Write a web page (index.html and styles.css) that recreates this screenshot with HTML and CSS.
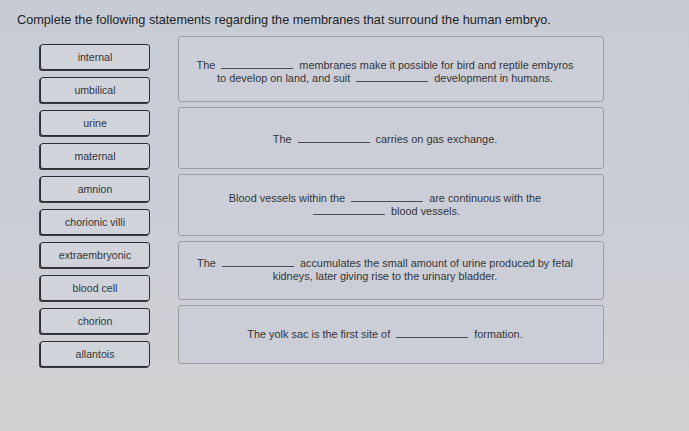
FILE: index.html
```html
<!DOCTYPE html>
<html>
<head>
<meta charset="utf-8">
<link rel="stylesheet" href="styles.css">
</head>
<body>
<h1 class="title">Complete the following statements regarding the membranes that surround the human embryo.</h1>
<div class="main">
  <div class="bank">
    <div class="chip">internal</div>
    <div class="chip">umbilical</div>
    <div class="chip">urine</div>
    <div class="chip">maternal</div>
    <div class="chip">amnion</div>
    <div class="chip">chorionic villi</div>
    <div class="chip">extraembryonic</div>
    <div class="chip">blood cell</div>
    <div class="chip">chorion</div>
    <div class="chip">allantois</div>
  </div>
  <div class="targets">
    <div class="box box1"><p>The <span class="blank"></span> membranes make it possible for bird and reptile embyros<br>to develop on land, and suit <span class="blank"></span> development in humans.</p></div>
    <div class="box box2"><p>The <span class="blank"></span> carries on gas exchange.</p></div>
    <div class="box box3"><p>Blood vessels within the <span class="blank"></span> are continuous with the<br><span class="blank"></span> blood vessels.</p></div>
    <div class="box box4"><p>The <span class="blank"></span> accumulates the small amount of urine produced by fetal<br>kidneys, later giving rise to the urinary bladder.</p></div>
    <div class="box box5"><p>The yolk sac is the first site of <span class="blank"></span> formation.</p></div>
  </div>
</div>
</body>
</html>
```
FILE: styles.css
```css
html, body {
  margin: 0;
  padding: 0;
}
body {
  width: 689px;
  height: 431px;
  overflow: hidden;
  background: linear-gradient(180deg, #c7cbd4 0%, #cacdd5 50%, #d0d1d2 100%);
  font-family: "Liberation Sans", Arial, sans-serif;
  color: #2e3034;
}
.title {
  margin: 0;
  padding: 13px 0 0 17px;
  font-family: "Liberation Sans", Arial, sans-serif;
  font-size: 12.7px;
  font-weight: normal;
  color: #1d1f24;
  line-height: 15px;
}
.main {
  display: flex;
  align-items: flex-start;
  gap: 28px;
  padding-top: 8px;
}
.bank {
  display: flex;
  flex-direction: column;
  gap: 7px;
  padding-left: 40px;
  padding-top: 8px;
}
.chip {
  width: 110px;
  height: 26px;
  box-sizing: border-box;
  border: 1.5px solid #2c2d31;
  border-radius: 3px;
  background: #d0d3da;
  box-shadow: -1px 1px 0 #3a3b3f;
  font-size: 10.6px;
  line-height: 24px;
  text-align: center;
  color: #34363b;
}
.targets {
  display: flex;
  flex-direction: column;
  gap: 5px;
}
.box {
  width: 426px;
  height: 62px;
  box-sizing: border-box;
  border: 1px solid #9a9da5;
  border-radius: 3px;
  background: #cbced6;
  display: flex;
  align-items: center;
  justify-content: center;
  padding: 0 16px 0 4px;
}
.box1 { height: 66px; }
.box4, .box5 { height: 59px; }
.box p {
  margin: 0;
  font-size: 10.9px;
  line-height: 13px;
  text-align: center;
  color: #34363b;
}
.box1 p { padding-top: 5px; }
.box2 p { padding-top: 3px; }
.box4 p { padding-bottom: 2px; }
.blank {
  display: inline-block;
  width: 72px;
  height: 9px;
  margin: 0 3px;
  border-bottom: 1px solid #4a4c52;
  vertical-align: baseline;
}
```
